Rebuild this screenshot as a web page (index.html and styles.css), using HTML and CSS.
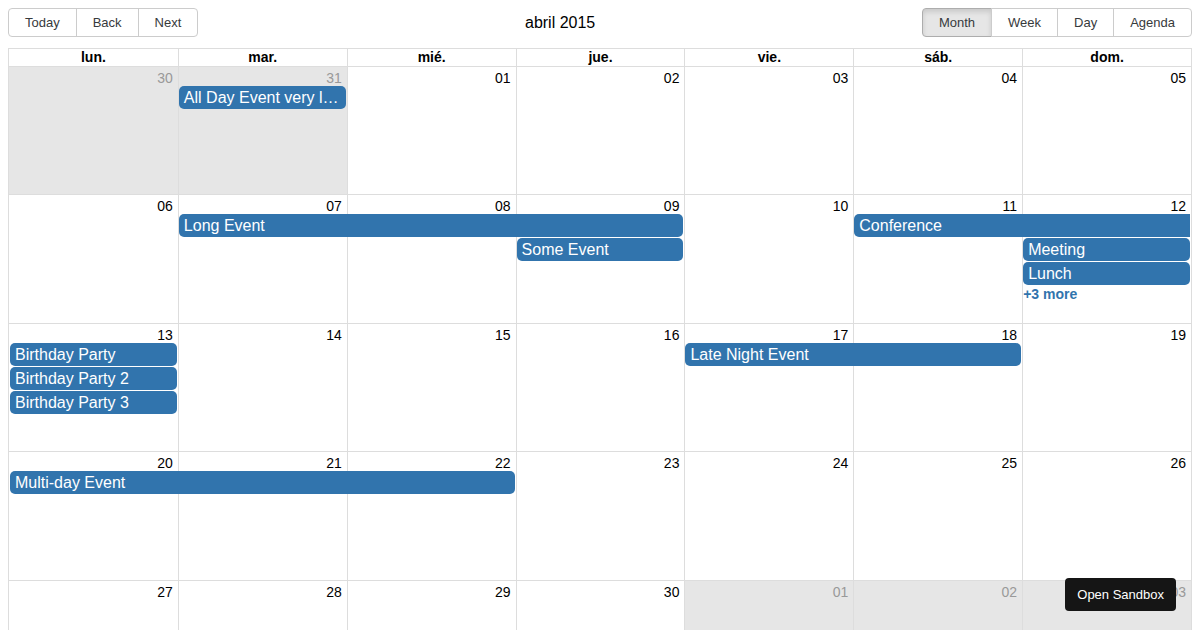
FILE: index.html
```html
<!DOCTYPE html>
<html lang="es">

<head>
  <meta charset="UTF-8">
  <meta name="viewport" content="width=device-width, initial-scale=1.0">
  <title>Calendario</title>
  <link rel="stylesheet" href="styles.css">
</head>

<body>
  <div class="calendar">
    <div class="toolbar">
      <span class="btn-group">
        <button>Today</button>
        <button>Back</button>
        <button>Next</button>
      </span>
      <span class="label">abril 2015</span>
      <span class="btn-group">
        <button class="active">Month</button>
        <button>Week</button>
        <button>Day</button>
        <button>Agenda</button>
      </span>
    </div>

    <div class="month">
      <div class="month-header">
        <div class="hd">lun.</div>
        <div class="hd">mar.</div>
        <div class="hd">mié.</div>
        <div class="hd">jue.</div>
        <div class="hd">vie.</div>
        <div class="hd">sáb.</div>
        <div class="hd">dom.</div>
      </div>

      <!-- semana 1 -->
      <div class="week">
        <div class="day off">30</div>
        <div class="day off">31</div>
        <div class="day">01</div>
        <div class="day">02</div>
        <div class="day">03</div>
        <div class="day">04</div>
        <div class="day">05</div>
        <div class="seg" style="grid-column: 2 / span 1; grid-row: 2"><div class="ev">All Day Event very long title</div></div>
      </div>

      <!-- semana 2 -->
      <div class="week">
        <div class="day">06</div>
        <div class="day">07</div>
        <div class="day">08</div>
        <div class="day">09</div>
        <div class="day">10</div>
        <div class="day">11</div>
        <div class="day">12</div>
        <div class="seg" style="grid-column: 2 / span 3; grid-row: 2"><div class="ev">Long Event</div></div>
        <div class="seg" style="grid-column: 4 / span 1; grid-row: 3"><div class="ev">Some Event</div></div>
        <div class="seg" style="grid-column: 6 / span 2; grid-row: 2"><div class="ev cont">Conference</div></div>
        <div class="seg" style="grid-column: 7 / span 1; grid-row: 3"><div class="ev">Meeting</div></div>
        <div class="seg" style="grid-column: 7 / span 1; grid-row: 4"><div class="ev">Lunch</div></div>
        <div class="seg" style="grid-column: 7 / span 1; grid-row: 5"><a class="more" href="#">+3 more</a></div>
      </div>

      <!-- semana 3 -->
      <div class="week">
        <div class="day">13</div>
        <div class="day">14</div>
        <div class="day">15</div>
        <div class="day">16</div>
        <div class="day">17</div>
        <div class="day">18</div>
        <div class="day">19</div>
        <div class="seg" style="grid-column: 1 / span 1; grid-row: 2"><div class="ev">Birthday Party</div></div>
        <div class="seg" style="grid-column: 1 / span 1; grid-row: 3"><div class="ev">Birthday Party 2</div></div>
        <div class="seg" style="grid-column: 1 / span 1; grid-row: 4"><div class="ev">Birthday Party 3</div></div>
        <div class="seg" style="grid-column: 5 / span 2; grid-row: 2"><div class="ev">Late Night Event</div></div>
      </div>

      <!-- semana 4 -->
      <div class="week">
        <div class="day">20</div>
        <div class="day">21</div>
        <div class="day">22</div>
        <div class="day">23</div>
        <div class="day">24</div>
        <div class="day">25</div>
        <div class="day">26</div>
        <div class="seg" style="grid-column: 1 / span 3; grid-row: 2"><div class="ev">Multi-day Event</div></div>
      </div>

      <!-- semana 5 -->
      <div class="week">
        <div class="day">27</div>
        <div class="day">28</div>
        <div class="day">29</div>
        <div class="day">30</div>
        <div class="day off">01</div>
        <div class="day off">02</div>
        <div class="day off">03</div>
      </div>
    </div>
  </div>

  <button class="sandbox">Open Sandbox</button>
</body>

</html>
```

FILE: styles.css
```css
html {
  overflow: hidden;
}

body {
  margin: 8px;
  font-family: "Liberation Sans", Arial, Helvetica, sans-serif;
  color: #000;
}

/* barra de herramientas */
.toolbar {
  display: flex;
  align-items: center;
  margin-bottom: 11px;
}

.label {
  flex: 1;
  text-align: center;
  font-size: 16px;
  padding: 0 10px;
}

.btn-group {
  display: inline-flex;
}

.btn-group button {
  font-family: inherit;
  font-size: 13px;
  line-height: 17px;
  color: #373a3c;
  background: none;
  border: 1px solid #ccc;
  padding: 5px 16px;
  margin: 0;
  border-radius: 0;
  cursor: pointer;
}

.btn-group button + button {
  margin-left: -1px;
}

.btn-group button:first-child {
  border-radius: 4px 0 0 4px;
}

.btn-group button:last-child {
  border-radius: 0 4px 4px 0;
}

.btn-group .active {
  background-color: #e6e6e6;
  border-color: #adadad;
  box-shadow: inset 0 3px 5px rgba(0, 0, 0, .125);
}

/* vista mensual */
.month {
  height: 659px;
  border: 1px solid #ddd;
  display: flex;
  flex-direction: column;
}

.month-header {
  display: grid;
  grid-template-columns: repeat(7, minmax(0, 1fr));
}

.hd {
  text-align: center;
  font-weight: bold;
  font-size: 14px;
  line-height: 17px;
  border-left: 1px solid #ddd;
}

.hd:first-child {
  border-left: 0;
}

.week {
  flex: 1;
  min-height: 0;
  display: grid;
  grid-template-columns: repeat(7, minmax(0, 1fr));
  grid-template-rows: 19px repeat(4, min-content) 1fr;
  border-top: 1px solid #ddd;
}

.day {
  grid-row: 1 / -1;
  border-left: 1px solid #ddd;
  text-align: right;
  padding: 3px 5px 0 0;
  font-size: 14px;
  line-height: 16px;
}

.day:nth-child(1) { grid-column: 1; border-left: 0; }
.day:nth-child(2) { grid-column: 2; }
.day:nth-child(3) { grid-column: 3; }
.day:nth-child(4) { grid-column: 4; }
.day:nth-child(5) { grid-column: 5; }
.day:nth-child(6) { grid-column: 6; }
.day:nth-child(7) { grid-column: 7; }

.day.off {
  background-color: #e6e6e6;
  color: #999;
}

/* eventos */
.seg {
  min-width: 0;
  padding: 0 1px 1px 1px;
}

.ev {
  background-color: #3174ad;
  color: #fff;
  border-radius: 5px;
  padding: 2px 5px;
  font-size: 16px;
  line-height: 19px;
  white-space: nowrap;
  overflow: hidden;
  text-overflow: ellipsis;
  cursor: pointer;
}

.ev.cont {
  border-radius: 5px 0 0 5px;
}

.more {
  display: block;
  color: #3174ad;
  font-weight: bold;
  font-size: 14px;
  line-height: 16px;
  text-decoration: none;
}

.sandbox {
  position: fixed;
  right: 24px;
  bottom: 19px;
  height: 33px;
  padding: 0 12px;
  border: 0;
  border-radius: 4px;
  background-color: #151515;
  color: #fff;
  font-family: inherit;
  font-size: 13px;
}
```
